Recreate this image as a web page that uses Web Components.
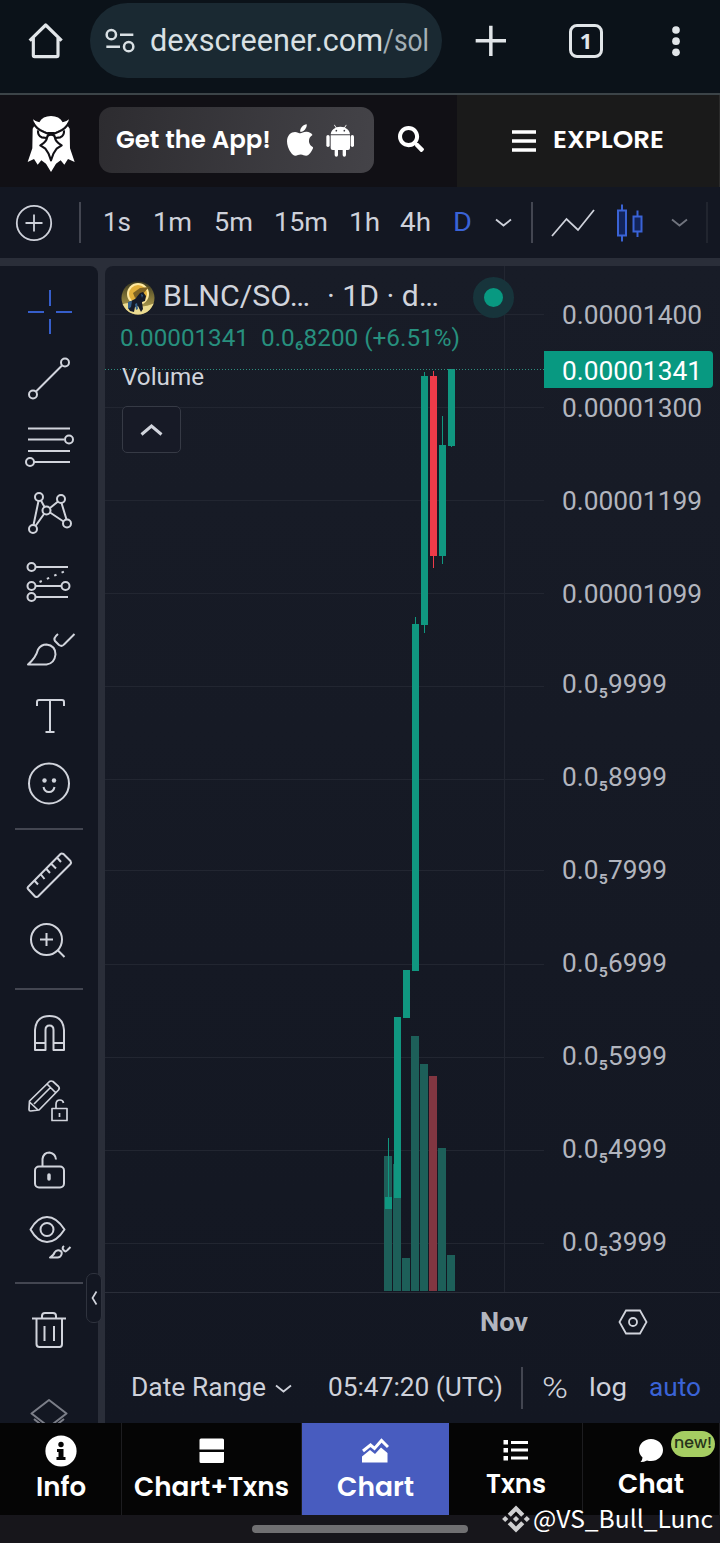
<!DOCTYPE html>
<html lang="en">
<head>
<meta charset="utf-8">
<title>BLNC/SOL - DEX Screener</title>
<style>
html,body{margin:0;background:#131722}
body{width:720px;height:1543px;overflow:hidden;font-family:Roboto,sans-serif;color:#d1d4dc}
</style>
</head>
<body>
<dex-page></dex-page>
<script>
const define=(name,html,setup)=>{
  const t=document.createElement('template');t.innerHTML=html;
  customElements.define(name,class extends HTMLElement{
    connectedCallback(){
      if(this.shadowRoot)return;
      this.attachShadow({mode:'open'}).append(t.content.cloneNode(true));
      if(setup)setup(this,this.shadowRoot);
    }
  });
};

/* name: [width, height, viewBox, markup] */
const ICONS={
home:[90,93,'0 0 270 279','<path d="M89 122 137 75l48 47M100 114v52q0 4 4 4h66q4 0 4-4v-52" fill="none" stroke="currentColor" stroke-width="9.500" stroke-linejoin="round"/>'],
tune:[30,26,'314 84 90 78','<g fill="none" stroke="currentColor" stroke-width="7.500"><circle cx="333" cy="104" r="14"/><circle cx="385" cy="140" r="14"/><path d="M359 104h40M318 140h41"/></g>'],
plus:[32,32,'344 74 96 96','<path d="M346 121.500h91M391.500 76v91" stroke="currentColor" stroke-width="10.500"/>'],
dots:[12,32,'928 73 36 96','<g fill="currentColor"><circle cx="946" cy="88" r="11.500"/><circle cx="946" cy="121.500" r="11.500"/><circle cx="946" cy="155" r="11.500"/></g>'],
owl:[99,92,'0 285 297 276','<path fill="#fff" d="M104 376 98 386 97 445 83 486 102 477 113 494 124 481 138 491 153 516 168 491 182 481 193 494 204 477 224 486 210 445 209 386 202 376 170 396H136ZM99 358q9 8 19 9 10-19 35-19t35 19q10-1 19-9-5 22-26 31-18 8-28 17-10-9-28-17-21-9-26-31Z"/><g fill="none" stroke="#111015" stroke-width="6.500" stroke-linejoin="round"><path d="M99 367q9 20 33 29 15 5 21 12 6-7 21-12 24-9 33-29"/><path d="M114 391q-1 16 11 21l15 2M192 391q1 16-11 21l-15 2"/><path fill="#fff" d="M153 404q-11 0-12 9-1 12-20 23l15 10q12 14 17 35 5-21 17-35l15-10q-19-11-20-23-1-9-12-9Z"/></g>'],
apple:[26,32,'4 28 372 456','<path fill="currentColor" d="M318.700 268.700c-.2-36.700 16.400-64.400 50-84.800-18.800-26.900-47.200-41.700-84.700-44.600-35.500-2.800-74.300 20.700-88.500 20.700-15 0-49.400-19.700-76.400-19.700C63.300 141.200 4 184.800 4 273.500q0 39.300 14.400 81.200c12.800 36.700 59 126.700 107.200 125.200 25.200-.6 43-17.900 75.800-17.900 31.800 0 48.300 17.900 76.400 17.900 48.600-.7 90.400-82.500 102.600-119.300-65.200-30.700-61.700-90-61.700-91.900zm-56.600-164.200c27.300-32.400 24.800-61.900 24-72.500-24.100 1.400-52 16.400-67.900 34.900-17.500 19.800-27.800 44.300-25.600 71.900 26.100 2 49.900-11.400 69.500-34.300z"/>'],
android:[28,33,'977 371 84 99','<g fill="currentColor"><path d="M991 402q1-14 15-20l-5-8 2-1 5 8q12-4 24 0l5-8 2 1-5 8q14 6 15 20ZM991 405h58v38q0 6-6 6h-6v15q0 5-5 5t-5-5v-15h-14v15q0 5-5 5t-5-5v-15h-6q-6 0-6-6Z"/><rect x="978" y="404" width="10" height="36" rx="5"/><rect x="1051" y="404" width="10" height="36" rx="5"/></g><g fill="#3b3a3f"><circle cx="1008" cy="391" r="2.500"/><circle cx="1032" cy="391" r="2.500"/></g>'],
search:[26,26,'0 0 512 512','<path fill="currentColor" d="M505 442.700L405.300 343c-4.500-4.500-10.600-7-17-7H372c27.600-35.300 44-79.700 44-128C416 93.100 322.900 0 208 0S0 93.100 0 208s93.100 208 208 208c48.300 0 92.700-16.400 128-44v16.300c0 6.400 2.500 12.500 7 17l99.700 99.700c9.400 9.400 24.600 9.400 33.900 0l28.300-28.300c9.400-9.400 9.400-24.600.1-34zM208 336c-70.700 0-128-57.200-128-128 0-70.700 57.200-128 128-128 70.700 0 128 57.200 128 128 0 70.700-57.200 128-128 128z"/>'],
menu:[24,22,'0 0 24 22','<path d="M0 2h24M0 11h24M0 20h24" stroke="currentColor" stroke-width="3.600"/>'],
addc:[38,38,'0 0 38 38','<g fill="none" stroke="currentColor" stroke-width="1.800"><circle cx="19" cy="19" r="17.200"/><path d="M10.500 19h17M19 10.500v17"/></g>'],
chev:[17,9,'0 0 17 9','<path d="m1 1.500 7.500 6L16 1.500" fill="none" stroke="currentColor" stroke-width="1.800"/>'],
area:[44,30,'0 0 44 30','<path d="M1 28 15.500 11 27 22 43 2" fill="none" stroke="currentColor" stroke-width="1.800"/>'],
candles:[28,40,'0 0 28 40','<g fill="#12245a" stroke="currentColor" stroke-width="2"><path d="M2 7.500h8v25H2ZM6 1.500v6M6 32.500v6M17.500 13.500h8v15h-8ZM21.500 7.500v6M21.500 28.500v5.500"/></g>'],
cross:[98,67,'0 278 98 67','<path d="M50 290v16M50 319v15M28 312h16M56 312h16" stroke="#365ecb" stroke-width="2"/>'],
line:[98,67,'0 345 98 67','<g><circle cx="33" cy="394.500" r="4"/><circle cx="65" cy="362.500" r="4"/><path d="m36 391.500 26-26"/></g>'],
fib:[98,67,'0 412 98 67','<path d="M28 428.500h42M28 439.500h36M28 451h42M34 462h36"/><circle cx="69" cy="439.500" r="4"/><circle cx="30" cy="462" r="4"/>'],
pattern:[98,68,'0 479 98 68','<circle cx="39" cy="497" r="4"/><circle cx="61" cy="499" r="4"/><circle cx="46.500" cy="510.500" r="4"/><circle cx="33" cy="529" r="4"/><circle cx="67" cy="523.500" r="4"/><path d="m38.500 501-5 24M41 500.500l3.500 6.500M50 508l8-6.500M44 514l-8.500 12M50 512.500l13.500 9M61.500 503l5 16.500"/>'],
forecast:[98,69,'0 547 98 69','<circle cx="31.500" cy="567" r="4"/><circle cx="31.500" cy="586" r="4"/><circle cx="65.500" cy="586" r="4"/><circle cx="31.500" cy="597" r="4"/><path d="M35.500 567H68M35.500 586h26M35.500 597H68"/><path d="m39.500 582 28-12" stroke-dasharray="2.500 5.500" stroke-width="2"/>'],
brush:[98,67,'0 616 98 67','<path d="M28 664.500q8-7 10-15 3-5 8.500-5 9 1 9 10-1 9-9 10ZM58 634q-5 4-3 7l4 4q3 2 5-.5L74.500 634"/>'],
text:[98,67,'0 683 98 67','<path d="M37 706v-4q0-2 2-2h23q2 0 2 2v4M50 700v32M45.500 732h9"/>'],
smile:[98,67,'0 750 98 67','<circle cx="49" cy="783.500" r="20"/><path d="M43.500 787q1 5 5.500 5t5.500-5"/><g fill="currentColor" stroke="none"><circle cx="44.500" cy="780.500" r="2.200"/><circle cx="54" cy="780.500" r="2.200"/></g>'],
ruler:[98,67,'0 841 98 67','<path d="M28 887q-1 1 0 2l7 7.500q2 1 3 0L70.500 864q1-1.500 0-3l-7-7q-2-1-3 0ZM34 880l4 4.500M40.500 874l4 5M46 868.500l4 4.500M51 863.500l5 5M57 857.500l4 4.500"/>'],
zoom:[98,67,'0 908 98 67','<circle cx="46.500" cy="939.500" r="15.500"/><path d="M40 939.500h13M46.500 933v13M57.500 950l7 7"/>'],
magnet:[98,67,'0 1000 98 67','<path d="M35 1050v-20q1-14 14.500-14t14.500 14v20H53.500v-20q0-4.500-4-4.500t-4 4.500v20ZM35 1043h10M54 1043h10"/>'],
pencil:[98,69,'0 1067 98 69','<path stroke-width="1.700" d="m29.500 1101-.5 8.500q0 1.500 1.500 1.500l8.500-1 19.500-20q1.500-2 0-3.500l-5.500-5q-2-1-3.500 0ZM29.500 1102l8.500 8M34 1104l17-17M47 1084l9 9M52 1108.500h15v12H52ZM56 1108.500v-4q0-4.500 4-4.500 3 0 3.500 3M59.500 1113v4"/>'],
lock:[98,68,'0 1136 98 68','<rect x="35" y="1166.500" width="29" height="21" rx="4"/><path d="M42.500 1166v-7q1-6.500 7-6.500 6 1 6.500 7"/><path d="M49 1175v4" stroke-width="3.500" stroke-linecap="round"/>'],
eye:[98,66,'0 1204 98 66','<path d="M30.500 1229.500q7-12.500 16.500-12.500t17.500 12.500q-8 12.500-17.500 12.500t-16.500-12.500Z"/><circle cx="47" cy="1229.500" r="6.500"/><path d="M50 1257.500q4-2.500 4.500-5 2-3 5-2t2 4q-1 3-4 3ZM64 1246q-2.500 2-.5 4l1 1q1.500 1 3-1l3-3"/>'],
trash:[98,67,'0 1297 98 67','<path d="M32 1318.500h34M36.500 1319v25q0 3 3 3h20q2.500 0 2.500-3v-25M42 1318v-2q0-3 3-3h8q3 0 3 3v2M44.500 1326v15M54 1326v15"/>'],
layers:[98,43,'0 1380 98 43','<g opacity=".55"><path d="m49 1400 17.500 13.500L49 1427 31.500 1413.500ZM34 1419l15 12 15-12"/></g>'],
up:[23,12,'0 0 23 12','<path d="m1.500 10.500 10-8.500 10 8.500" fill="none" stroke="currentColor" stroke-width="3"/>'],
hex:[30,26,'0 0 30 26','<g fill="none" stroke="currentColor" stroke-width="1.800"><path d="M8 1.500h14L28.500 13 22 24.500H8L1.500 13Z"/><circle cx="15" cy="13" r="4"/></g>'],
info:[32,32,'0 0 32 32','<circle cx="16" cy="16" r="15.600" fill="currentColor"/><path fill="#050505" d="M12 14h6.500v8h2v3h-9v-3h2v-5H12Z"/><circle cx="16" cy="9.500" r="2.700" fill="#050505"/>'],
split:[26,26,'0 0 26 26','<path fill="currentColor" d="M2 .5h21.500q1.500 0 1.500 1.500v9.500H.5V2Q.5.5 2 .5ZM.5 14H25v9.500q0 1.500-1.500 1.500H2Q.5 25 .5 23.500Z"/>'],
chart:[28,26,'0 0 28 26','<path d="m2 13 7.500-6 4 3.500 7-8L27 9" fill="none" stroke="currentColor" stroke-width="3"/><path fill="currentColor" d="M1 24.500v-6L9 12l5 4 6-6.500 6.500 5.500v9.500Z"/>'],
list:[26,22,'0 0 26 22','<path fill="currentColor" d="M.5 1h4.500v4.500H.5ZM.5 9h4.500v4.500H.5ZM.5 17h4.500v4.500H.5ZM8 2h17v3H8ZM8 9.500h17v3H8ZM8 17.500h17v3H8Z"/>'],
chat:[26,25,'0 0 26 25','<path fill="currentColor" d="M13 1c7 0 12 5 12 11s-5 11-12 11q-2 0-4-.6Q6 24 2.500 24q2-2 2-4.500Q1 16 1 12C1 6 6 1 13 1Z"/>'],
binance:[28,28,'0 0 28 28','<path fill="currentColor" d="m14 .5 8.300 8.200-3.100 3.100L14 6.600l-5.200 5.200-3.100-3.100ZM3.200 10.900 6.300 14l-3.100 3.100L.1 14ZM14 10.900l3.100 3.100-3.100 3.100-3.100-3.100ZM24.800 10.900l3.100 3.100-3.100 3.100-3.100-3.100ZM8.800 16.200l5.200 5.200 5.200-5.200 3.100 3.100-8.300 8.200-8.300-8.200Z"/>'],
token:[34,34,'0 0 34 34','<defs><clipPath id="c"><circle cx="17" cy="17" r="16.500"/></clipPath><linearGradient id="g" x2="0" y2="1"><stop offset="0" stop-color="#39371f"/><stop offset=".55" stop-color="#8a7c3c"/><stop offset="1" stop-color="#c9b262"/></linearGradient></defs><g clip-path="url(#c)"><path fill="url(#g)" d="M0 0h34v34H0Z"/><circle cx="17" cy="13" r="11" fill="#ffe9a0"/><circle cx="17" cy="13" r="9" fill="#e3b03a"/><path fill="#ebdb91" d="M0 24q8-4 14 0t20-2v12H0Z"/><path fill="#7e6224" d="m12 12 7-5 9-1-7 8-7 3Z"/><path fill="#151a29" d="m19 12 3-1 3 4-1 5-3 1 1 7-2 3-3-6-3 1-1 5-4-1-2-3 1-6 6-3Z"/><path fill="#34608b" d="m7 21 4-1-1 6-3 2ZM14 23l2-1 1 6-2 1ZM20 13l2 1-1 3Z"/></g>']
};
define('ui-icon','<style>:host{display:block;flex:none;line-height:0}svg{display:block}</style><svg></svg>',(h,r)=>{
  const i=ICONS[h.getAttribute('name')],s=r.querySelector('svg');
  if(!i)return;
  s.setAttribute('width',i[0]);s.setAttribute('height',i[1]);s.setAttribute('viewBox',i[2]);s.innerHTML=i[3];
});

/* text squeezed or stretched to the width in w */
define('fit-text','<style>:host{display:block;flex:none;white-space:pre}span{display:inline-block;transform-origin:0 50%}</style><span><slot></slot></span>',(h,r)=>{
  const w=+h.getAttribute('w'),s=r.querySelector('span');
  h.style.width=w+'px';
  s.style.transform='scaleX('+w/s.getBoundingClientRect().width+')';
});

define('browser-bar',`<style>
:host{display:flex;height:93px;border-bottom:2px solid #3c4448;background:#0b1219;color:#e1e5e8}
.url{display:flex;align-items:center;box-sizing:border-box;width:352px;height:75px;margin-top:3px;padding-left:15px;border-radius:38px;background:#1a2932;color:#d9e0e4}
.addr{display:flex;margin-left:15px;font-size:31px;line-height:42px}
.path{color:#a4b0b6}
.r{display:flex;flex:1;align-items:center;height:82px}
.tab{box-sizing:border-box;width:34px;height:34px;border:3.500px solid;border-radius:8px;margin-left:62px;font:700 22px/27px "Noto Sans",sans-serif;text-align:center}
</style><ui-icon name="home"></ui-icon><div class="url"><ui-icon name="tune"></ui-icon><div class="addr"><fit-text w="233">dexscreener.com</fit-text><fit-text class="path" w="46">/sol</fit-text></div></div>
<div class="r"><ui-icon name="plus" style="margin-left:33px"></ui-icon><div class="tab">1</div><ui-icon name="dots" style="margin-left:67px"></ui-icon></div>`);

define('app-header',`<style>
:host{display:flex;height:92px;background:#111015;color:#fff;font:600 25px/34px Poppins,Inter,sans-serif;font-feature-settings:"cv11"}
.app{display:flex;align-items:center;box-sizing:border-box;width:275px;height:66px;margin-top:12px;padding-left:17px;border-radius:13px;background:linear-gradient(100deg,#2d2c30,#444348)}
.s{width:83px;box-sizing:border-box;padding:31px 0 0 24px}
.ex{display:flex;flex:1;box-sizing:border-box;align-items:center;padding:0 0 3px 55px;background:#1a1a1a;border-right:1px solid #2b2b2b}
</style><ui-icon name="owl"></ui-icon><div class="app"><fit-text w="155">Get the App!</fit-text><ui-icon name="apple" style="margin-left:16px"></ui-icon><ui-icon name="android" style="margin-left:13px"></ui-icon></div>
<div class="s"><ui-icon name="search"></ui-icon></div><div class="ex"><ui-icon name="menu" style="padding-top:2px"></ui-icon><fit-text w="111" style="margin-left:17px">EXPLORE</fit-text></div>`);

define('time-bar',`<style>
:host{display:flex;align-items:center;height:71px;background:#131722;border-bottom:8px solid #2a2e39;font-size:26px;line-height:32px;color:#ced1da}
fit-text{margin-top:-2px}
.v{width:2px;height:41px;background:#434651}
.b{color:#3a63d6}
</style><ui-icon name="addc" style="margin-left:15px"></ui-icon><div class="v" style="margin-left:26px"></div>
<fit-text w="28" style="margin-left:22px">1s</fit-text><fit-text w="39" style="margin-left:22px">1m</fit-text><fit-text w="39" style="margin-left:22px">5m</fit-text><fit-text w="54" style="margin-left:21px">15m</fit-text><fit-text w="31" style="margin-left:21px">1h</fit-text><fit-text w="31" style="margin-left:20px">4h</fit-text><fit-text class="b" w="19" style="margin-left:22px">D</fit-text>
<ui-icon name="chev" style="margin-left:23px"></ui-icon><div class="v" style="margin-left:19px"></div><ui-icon name="area" style="margin-left:18px"></ui-icon><ui-icon class="b" name="candles" style="margin-left:21px"></ui-icon><ui-icon name="chev" style="margin-left:27px;opacity:.5"></ui-icon><div class="v" style="margin-left:18px;opacity:.3"></div>`);

define('tool-rail',`<style>
:host{display:block;position:relative;width:98px;height:1157px;background:#131722;border-radius:0 8px 0 0;color:#d1d4dc}
.tools{display:flex;flex-direction:column;padding-top:12px;height:1145px;overflow:hidden;fill:none;stroke:currentColor;stroke-width:2;stroke-linejoin:round}
hr{flex:none;width:68px;height:2px;border:0;margin:11px 15px;background:#434651}
.h{position:absolute;left:86px;top:1007px;width:14px;height:48px;border:1px solid #2f333e;border-radius:7px;background:#131722}
.h svg{display:block}
</style><div class="tools"><ui-icon name="cross"></ui-icon><ui-icon name="line"></ui-icon><ui-icon name="fib"></ui-icon><ui-icon name="pattern"></ui-icon><ui-icon name="forecast"></ui-icon><ui-icon name="brush"></ui-icon><ui-icon name="text"></ui-icon><ui-icon name="smile"></ui-icon><hr><ui-icon name="ruler"></ui-icon><ui-icon name="zoom"></ui-icon><hr style="margin:13px 15px 10px"><ui-icon name="magnet"></ui-icon><ui-icon name="pencil"></ui-icon><ui-icon name="lock"></ui-icon><ui-icon name="eye"></ui-icon><hr style="margin:12px 15px 13px"><ui-icon name="trash"></ui-icon><ui-icon name="layers" style="margin-top:16px"></ui-icon></div>
<div class="h"><svg width="14" height="48"><path d="M9.500 17.500 5.500 24l4 6.500" fill="none" stroke="#d1d4dc" stroke-width="1.700"/></svg></div>`);

define('price-plot','<style>:host{display:block;width:439px;height:1026px}svg{display:block}</style><svg width="439" height="1026" viewBox="105 266 439 1026" shape-rendering="crispEdges"></svg>',(h,r)=>{
  let s='';
  for(const y of [314,407,500,593,686,779,870,964,1057,1150,1243])s+=`<rect x="105" y="${y}" width="439" height="1" fill="#222631"/>`;
  s+='<rect x="504" y="266" width="1" height="1026" fill="#222631"/>';
  [[384,1156],[393,1164],[402,1258],[411,1036],[420,1064],[429,1076,1],[438,1148],[447,1255]].forEach(([x,y,d])=>s+=`<rect x="${x}" y="${y}" width="8" height="${1291-y}" fill="${d?'#813641':'#1d5f59'}"/>`);
  [[385,1197,1209,1138,1209],[394,1017,1198,1017,1198],[403,970,1018,970,1018],[412,624,971,617,971],[421,376,625,372,633],[430,376,556,371,568,1],[439,445,556,416,564],[448,369,446,369,447]].forEach(([x,a,b,t,e,d])=>{
    const c=d?'#ee3b49':'#109780';
    s+=`<rect x="${x}" y="${a}" width="7" height="${b-a}" fill="${c}"/><rect x="${x+3}" y="${t}" width="1" height="${e-t}" fill="${c}"/>`;});
  s+='<path d="M105 369.500H544" stroke="#2e8f80" stroke-dasharray="1 2"/>';
  r.querySelector('svg').innerHTML=s;
});

define('price-axis',`<style>
:host{display:block;position:relative;width:176px;height:1026px;font-size:26px;color:#b2b5be}
.l{display:flex;flex-direction:column;padding:3px 0 0 18px}
.l div{height:93px;line-height:93px;white-space:pre}
.l .sub{margin-top:-3px;margin-bottom:3px}
.tag{position:absolute;left:0;top:85px;width:151px;height:37px;padding-left:18px;border-radius:0 4px 4px 0;background:#089981;color:#fff;line-height:40px}
</style><div class="l"></div><div class="tag"><fit-text w="140">0.00001341</fit-text></div>`,(h,r)=>{
  const l=r.querySelector('.l');
  ['0.00001400','0.00001300','0.00001199','0.00001099','0.0₅9999','0.0₅8999','0.0₅7999','0.0₅6999','0.0₅5999','0.0₅4999','0.0₅3999'].forEach((t,i)=>{
    const d=document.createElement('div'),f=document.createElement('fit-text');
    f.setAttribute('w',i<4?140:105);f.textContent=t;if(i>3)d.className='sub';d.append(f);l.append(d);});
});

define('chart-legend',`<style>
:host{display:block}
.a{display:flex;align-items:center;height:34px;font-size:29px;line-height:34px}
.a fit-text{margin-top:-2px}
.g{display:flex;height:32px;margin-top:8px;font-size:24px;line-height:32px;color:#27907e}
.vol{margin-top:7px;font-size:24px;line-height:32px}
.btn{display:flex;align-items:center;justify-content:center;box-sizing:border-box;width:59px;height:47px;margin-top:13px;border:1px solid #363a45;border-radius:5px;background:#171a26}
.dot{width:19px;height:19px;margin-left:34px;border:11px solid #17343b;border-radius:50%;background:#089981}
</style><div class="a"><ui-icon name="token" style="margin:2px 0 0 -1px"></ui-icon><fit-text w="147" style="margin-left:8px">BLNC/SO…</fit-text><fit-text w="112" style="margin-left:17px">· 1D · d…</fit-text><div class="dot"></div></div>
<div class="g"><fit-text w="129" style="margin-left:-2px">0.00001341</fit-text><fit-text w="199" style="margin-left:12px">0.0₆8200 (+6.51%)</fit-text></div>
<fit-text class="vol" w="82">Volume</fit-text><div class="btn"><ui-icon name="up"></ui-icon></div>`);

define('chart-pane',`<style>
:host{display:flex;flex-direction:column;position:relative;width:615px;height:1157px;background:linear-gradient(#181c27,#131722);border-radius:8px 0 0 0;overflow:hidden}
.p{display:flex;height:1026px}
chart-legend{position:absolute;left:17px;top:14px}
.t{display:flex;align-items:center;box-sizing:border-box;height:60px;border-top:1px solid #2a2e39;font:700 26px/32px Roboto,sans-serif;color:#b2b5be}
.f{display:flex;align-items:center;height:70px;font-size:26px;line-height:32px;color:#ced1da}
.v{width:2px;height:42px;margin:1px 0 0 18px;background:#434651}
</style><div class="p"><price-plot></price-plot><price-axis></price-axis></div>
<div class="t"><fit-text w="48" style="margin:-1px 0 0 375px">Nov</fit-text><ui-icon name="hex" style="margin:-1px 0 0 90px;color:#d1d4dc"></ui-icon></div>
<div class="f"><fit-text w="135" style="margin-left:26px">Date Range</fit-text><ui-icon name="chev" style="margin:3px 0 0 9px"></ui-icon><fit-text w="175" style="margin-left:36px">05:47:20 (UTC)</fit-text><div class="v"></div><fit-text w="26" style="margin:2px 0 0 19px;font-size:29px;font-weight:300">%</fit-text><fit-text w="38" style="margin-left:21px">log</fit-text><fit-text w="52" style="margin-left:22px;color:#3a63d6">auto</fit-text></div>
<chart-legend></chart-legend>`);

define('tab-item',`<style>
:host{display:flex;flex-direction:column;align-items:center;position:relative;box-sizing:border-box;height:92px;border-right:1px solid #1d1d20;color:#fff;font:600 26px/28px Poppins,Inter,sans-serif;font-feature-settings:"cv11"}
:host([active]){background:#485cbf;border-color:#485cbf}
.i{height:47px;display:flex;align-items:center;padding-top:4px}
.l{margin-top:-1px}
:host([lift]) .l{margin-top:-4px}:host([lift]) .i{padding-top:3px;height:48px}
::slotted(.new){position:absolute;right:4px;top:8px;width:44px;height:26px;border-radius:13px;background:#a5cd62}
</style><div class="i"></div><div class="l"><slot></slot></div><slot name="badge"></slot>`,(h,r)=>{
  const n=document.createElement('ui-icon');
  n.setAttribute('name',h.getAttribute('icon'));r.querySelector('.i').append(n);
});

define('tab-bar',`<style>
:host{display:grid;grid-template-columns:122px 180px 147px 134px 137px;height:92px;background:#050505}
.new{font:500 16px/24px Poppins,Inter,sans-serif;color:#26331a;text-align:center}
.new fit-text{margin:0 auto}
</style><tab-item icon="info"><fit-text w="50">Info</fit-text></tab-item><tab-item icon="split"><fit-text w="155">Chart+Txns</fit-text></tab-item><tab-item icon="chart" active><fit-text w="77">Chart</fit-text></tab-item><tab-item icon="list" lift><fit-text w="60">Txns</fit-text></tab-item><tab-item icon="chat" lift><fit-text w="66">Chat</fit-text><div slot="badge" class="new"><fit-text w="38">new!</fit-text></div></tab-item>`);

define('gesture-bar',`<style>
:host{display:block;position:relative;height:28px;background:#17161b}
.p{width:216px;height:8px;border-radius:4px;background:#707072;margin:0 auto;position:relative;top:10px}
.w{display:flex;align-items:center;position:absolute;left:502px;top:-10px;height:28px;color:#fff;font:400 24px/24px "Noto Sans CJK SC",sans-serif}
.w ui-icon{color:#cfcfd0}
</style><div class="p"></div><div class="w"><ui-icon name="binance"></ui-icon><fit-text w="180" style="margin:-2px 0 0 3px">@VS_Bull_Lunc</fit-text></div>`);

define('dex-page',`<style>
:host{display:block;width:720px;height:1543px;overflow:hidden}
.m{display:flex;gap:7px;background:#2a2e39}
</style><browser-bar></browser-bar><app-header></app-header><time-bar></time-bar><div class="m"><tool-rail></tool-rail><chart-pane></chart-pane></div><tab-bar></tab-bar><gesture-bar></gesture-bar>`);
</script>
</body>
</html>
